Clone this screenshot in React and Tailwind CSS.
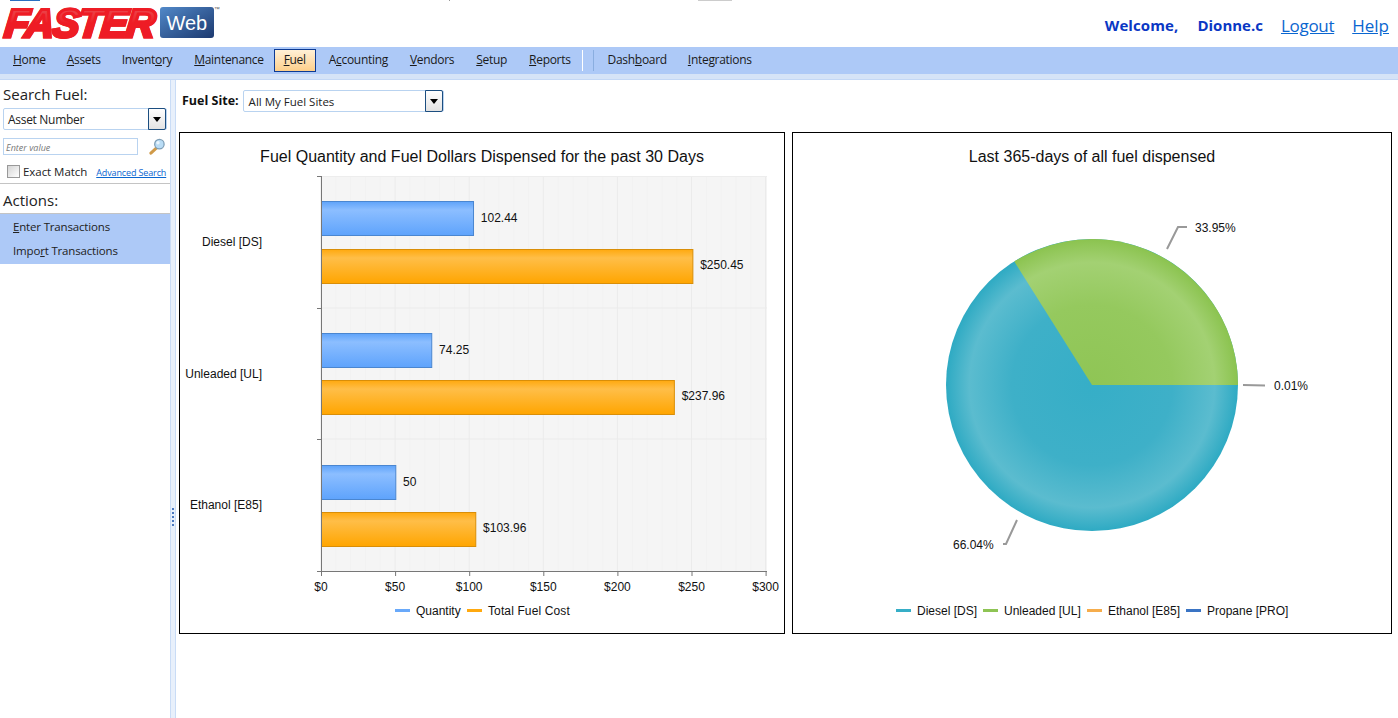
const UI_FONT = "font-['Open_Sans','Noto_Sans',sans-serif]";

const NAV_LEFT = [
  ['', 'H', 'ome', 'mr-[21px]'],
  ['', 'A', 'ssets', 'mr-[21px]'],
  ['Invent', 'o', 'ry', 'mr-[22px]'],
  ['', 'M', 'aintenance', 'mr-[22px]'],
  ['', 'F', 'uel', ''],
  ['A', 'c', 'counting', 'mr-[22px]'],
  ['', 'V', 'endors', 'mr-[22px]'],
  ['', 'S', 'etup', 'mr-[22px]'],
  ['', 'R', 'eports', 'mr-[22px]'],
];

const NAV_RIGHT = [
  ['Dash', 'b', 'oard'],
  ['', 'I', 'ntegrations'],
];

const BARS = [
  { label: 'Diesel [DS]', labelY: 242, qty: 102.44, qtyText: '102.44', cost: 250.45, y1: 201, y2: 249 },
  { label: 'Unleaded [UL]', labelY: 374, qty: 74.25, qtyText: '74.25', cost: 237.96, y1: 333, y2: 380 },
  { label: 'Ethanol [E85]', labelY: 505, qty: 50, qtyText: '50', cost: 103.96, y1: 465, y2: 512 },
];

const TICKS = [0, 50, 100, 150, 200, 250, 300];
const toX = (v) => 321 + v * 1.482;

function NavLabel({ parts }) {
  return (
    <span>
      {parts[0]}
      <u>{parts[1]}</u>
      {parts[2]}
    </span>
  );
}

function DropButton() {
  return (
    <span className="flex h-[22px] w-[18px] shrink-0 items-center justify-center rounded-r-[2px] border border-[#1c4e80] bg-gradient-to-b from-white to-[#e3e3e3]">
      <span className="h-0 w-0 border-x-[4.5px] border-t-[5px] border-x-transparent border-t-black" />
    </span>
  );
}

function BarChart() {
  const grid = [];
  for (let v = 0; v <= 300; v += 10) grid.push(v);
  return (
    <svg viewBox="180 133 604 500" className="block h-[500px] w-[604px]" fontFamily="'Liberation Sans', Arial, sans-serif">
      <defs>
        <linearGradient id="blueBar" x1="0" y1="0" x2="0" y2="1">
          <stop offset="0" stopColor="#5ea3fa" />
          <stop offset="0.25" stopColor="#8cbeff" />
          <stop offset="1" stopColor="#5ea3fc" />
        </linearGradient>
        <linearGradient id="orangeBar" x1="0" y1="0" x2="0" y2="1">
          <stop offset="0" stopColor="#ffa90f" />
          <stop offset="0.25" stopColor="#ffbe48" />
          <stop offset="1" stopColor="#ffa500" />
        </linearGradient>
      </defs>
      <text x="482" y="162" fontSize="16" textAnchor="middle" fill="#111">
        Fuel Quantity and Fuel Dollars Dispensed for the past 30 Days
      </text>
      <rect x="321" y="176" width="446" height="396" fill="#f5f5f5" />
      {grid.map((v) => (
        <line key={v} x1={toX(v)} x2={toX(v)} y1="176" y2="572" stroke={v % 50 === 0 ? '#ebebeb' : '#f2f2f2'} />
      ))}
      <line x1="321" x2="767" y1="308" y2="308" stroke="#ebebeb" />
      <line x1="321" x2="767" y1="439" y2="439" stroke="#ebebeb" />
      <line x1="321" x2="767" y1="176.5" y2="176.5" stroke="#ededed" />
      {BARS.map((b) => (
        <g key={b.label}>
          <text x="262" y={b.labelY + 4} fontSize="12" textAnchor="end" fill="#111">{b.label}</text>
          <rect x="321.5" y={b.y1 + 0.5} width={toX(b.qty) - 320.8} height="34" fill="url(#blueBar)" stroke="#4a86d0" />
          <text x={toX(b.qty) + 8} y={b.y1 + 21} fontSize="12" fill="#111">{b.qtyText}</text>
          <rect x="321.5" y={b.y2 + 0.5} width={toX(b.cost) - 320.8} height="34" fill="url(#orangeBar)" stroke="#d98e08" />
          <text x={toX(b.cost) + 8} y={b.y2 + 20} fontSize="12" fill="#111">{'$' + b.cost.toFixed(2)}</text>
        </g>
      ))}
      <line x1="321.5" x2="321.5" y1="176" y2="572" stroke="#777" />
      <line x1="317" x2="767" y1="571.5" y2="571.5" stroke="#777" />
      {[176.5, 308.5, 439.5].map((y) => (
        <line key={y} x1="317" x2="321" y1={y} y2={y} stroke="#777" />
      ))}
      {TICKS.map((v) => (
        <g key={v}>
          <line x1={toX(v) + 0.5} x2={toX(v) + 0.5} y1="572" y2="576" stroke="#777" />
          <text x={toX(v)} y="591" fontSize="12" textAnchor="middle" fill="#111">{'$' + v}</text>
        </g>
      ))}
      <rect x="395" y="609" width="15" height="3" fill="#69a9fa" />
      <text x="416" y="615" fontSize="12" fill="#111">Quantity</text>
      <rect x="467" y="609" width="15" height="3" fill="#ffa90f" />
      <text x="488" y="615" fontSize="12" letterSpacing="0.12" fill="#111">Total Fuel Cost</text>
    </svg>
  );
}

function PieChart() {
  return (
    <svg viewBox="793 133 598 500" className="block h-[500px] w-[598px]" fontFamily="'Liberation Sans', Arial, sans-serif">
      <defs>
        <radialGradient id="bluePie" gradientUnits="userSpaceOnUse" cx="1092" cy="385" r="146">
          <stop offset="0" stopColor="#36aec7" />
          <stop offset="0.55" stopColor="#3eb0c8" />
          <stop offset="0.84" stopColor="#5bbccf" />
          <stop offset="1" stopColor="#2eaac3" />
        </radialGradient>
        <radialGradient id="greenPie" gradientUnits="userSpaceOnUse" cx="1092" cy="385" r="146">
          <stop offset="0" stopColor="#8fc555" />
          <stop offset="0.55" stopColor="#95c95e" />
          <stop offset="0.84" stopColor="#a3d173" />
          <stop offset="1" stopColor="#8bc34f" />
        </radialGradient>
      </defs>
      <text x="1092" y="162" fontSize="16" textAnchor="middle" fill="#111">Last 365-days of all fuel dispensed</text>
      <circle cx="1092" cy="385" r="146" fill="url(#bluePie)" />
      <path d="M1092 385 L1238 385 A146 146 0 0 0 1014.3 261.5 Z" fill="url(#greenPie)" />
      <g fill="none" stroke="#999" strokeWidth="2">
        <path d="M1167 249 L1178 227 L1187 227" />
        <path d="M1243 385 L1265 385.500" />
        <path d="M1017 520 L1006 544 L1003 544" />
      </g>
      <text x="1195" y="232" fontSize="12" fill="#111">33.95%</text>
      <text x="1274" y="390" fontSize="12" fill="#111">0.01%</text>
      <text x="953" y="549" fontSize="12" fill="#111">66.04%</text>
      <rect x="896" y="609" width="15" height="3" fill="#36aec7" />
      <text x="917" y="615" fontSize="12" fill="#111">Diesel [DS]</text>
      <rect x="983" y="609" width="15" height="3" fill="#8ec454" />
      <text x="1004" y="615" fontSize="12" fill="#111">Unleaded [UL]</text>
      <rect x="1087" y="609" width="15" height="3" fill="#f6ad4c" />
      <text x="1108" y="615" fontSize="12" fill="#111">Ethanol [E85]</text>
      <rect x="1186" y="609" width="15" height="3" fill="#3a74c4" />
      <text x="1207" y="615" fontSize="12" fill="#111">Propane [PRO]</text>
    </svg>
  );
}

export default function App() {
  return (
    <div className={`flex h-[718px] w-[1398px] flex-col overflow-hidden bg-white ${UI_FONT}`}>
      {/* Header */}
      <div className="relative flex h-[47px] shrink-0 items-start justify-between">
        {/* slivers of the scrolled-off row above */}
        <span className="absolute top-0 left-[10px] h-px w-[30px] bg-[#2a6fc0]" />
        <span className="absolute top-0 left-[449px] h-px w-px bg-[#999]" />
        <span className="absolute top-0 left-[698px] h-px w-[34px] bg-[#ccc]" />
        <div className="flex items-start pl-px">
          <span className="-skew-x-6 whitespace-nowrap bg-gradient-to-b from-[#e85560] via-[#ee1c25] to-[#ee1c25] bg-clip-text pr-[6px] pl-[4px] font-['Liberation_Sans',sans-serif] text-[40px] leading-[46px] font-bold tracking-[-1.5px] text-transparent italic [-webkit-text-stroke:3px_#ee1c25]">
            FASTER
          </span>
          <span className="mt-[7px] flex h-[31px] w-[54px] items-center justify-center rounded-[3px] bg-gradient-to-br from-[#5289c9] to-[#1d3a70] font-['Liberation_Sans',sans-serif] text-[20px] leading-none text-white">
            Web
          </span>
          <span className="mt-[6px] font-['Liberation_Sans',sans-serif] text-[6px] leading-none text-[#555]">™</span>
        </div>
        <div className="flex items-baseline pt-[13px] pr-[9px]">
          <span className="-translate-y-px text-[15px] font-bold tracking-[0.1px] text-[#0a37c4]">Welcome,</span>
          <span className="ml-[19px] -translate-y-px text-[15px] font-bold text-[#0a37c4]">Dionne.c</span>
          <a className="ml-[18px] text-[17px] tracking-[-0.3px] text-[#0a66d0] underline">Logout</a>
          <a className="ml-[18px] text-[17px] text-[#0a66d0] underline">Help</a>
        </div>
      </div>

      {/* Nav */}
      <div className="flex h-[27px] shrink-0 items-center bg-[#adc9f7] pb-[1px] pl-[13px] text-[12px] tracking-[-0.3px] text-[#1a1a1a]">
        {NAV_LEFT.map((item) =>
          item[1] === 'F' ? (
            <span
              key={item[2]}
              className="-ml-[12px] mr-[13px] flex h-[23px] w-[42px] items-center justify-center border border-[#0c3a94] bg-gradient-to-b from-[#fff0d6] to-[#fdcf8a]"
            >
              <NavLabel parts={item} />
            </span>
          ) : (
            <span key={item[1] + item[2]} className={item[3]}>
              <NavLabel parts={item} />
            </span>
          )
        )}
        <span className="ml-[-11px] h-[21px] w-px bg-white" />
        <span className="ml-[10px] h-[21px] w-px bg-[#8aaee0]" />
        <span className="ml-[14px] flex gap-[21px]">
          {NAV_RIGHT.map((item) => (
            <span key={item[2]}>
              <NavLabel parts={item} />
            </span>
          ))}
        </span>
      </div>
      <div className="h-[6px] shrink-0 border-b border-[#c3d7f5] bg-[#d5e3f7]" />

      {/* Body */}
      <div className="flex min-h-0 flex-1">
        <aside className="w-[170px] shrink-0 text-[#222]">
          <div className="h-[104px] border-b border-[#c4c4c4]">
            <div className="pt-[3px] pl-[3px] text-[15px] leading-[22px]">Search Fuel:</div>
            <div className="mx-[3px] mt-[3px] flex h-[22px] items-center justify-between rounded-[2px] border border-[#b9d3f0] pl-[4px] text-[12px] tracking-[-0.3px]">
              <span className="mt-[1px]">Asset Number</span>
              <DropButton />
            </div>
            <div className="mt-[8px] flex items-center pl-[3px]">
              <span className="flex h-[17px] w-[135px] items-center border border-[#b9d3f0] pl-[2px] text-[9px] text-[#777] italic">
                <span className="mt-[3px]">Enter value</span>
              </span>
              <svg viewBox="0 0 18 18" className="ml-[11px] h-[17px] w-[17px]">
                <path d="M8 10.500 L2 16" stroke="#d09a48" strokeWidth="3.200" strokeLinecap="round" />
                <circle cx="11" cy="6.500" r="5" fill="#b9dcf5" stroke="#7d9db5" strokeWidth="1.300" />
                <circle cx="9.500" cy="5" r="1.800" fill="#eaf5fd" />
              </svg>
            </div>
            <div className="mt-[8px] flex items-center pl-[7px]">
              <span className="h-[13px] w-[13px] border border-[#999] bg-gradient-to-br from-[#d5d5d5] to-white" />
              <span className="ml-[3px] text-[11.500px] tracking-[-0.05px]">Exact Match</span>
              <a className="mt-[2px] ml-[9px] text-[9px] tracking-[-0.13px] text-[#0a66d0] underline">Advanced Search</a>
            </div>
          </div>
          <div className="pt-[5px] pl-[3px] text-[15px] leading-[22px]">Actions:</div>
          <div className="mt-[2px] border-t border-[#c4c4c4] bg-[#adc9f7] pt-[1px] pb-[1px] pl-[13px] text-[11.500px] leading-[24px] tracking-[-0.17px]">
            <div>
              <u>E</u>nter Transactions
            </div>
            <div>
              Impo<u>r</u>t Transactions
            </div>
          </div>
        </aside>

        {/* Splitter */}
        <div className="relative w-[6px] shrink-0 border-x border-[#c9dcf6] bg-[#e8f0fb]">
          <div className="absolute top-[428px] left-[1px] flex flex-col gap-[2px]">
            {[0, 1, 2, 3, 4].map((i) => (
              <span key={i} className="h-[2px] w-[2px] bg-[#4a78c0]" />
            ))}
          </div>
        </div>

        <main className="min-w-0 flex-1 pl-[3px]">
          <div className="flex h-[52px] items-start pt-[10px] pl-[3px]">
            <span className="mt-[2px] text-[12.500px] font-bold text-[#111]">Fuel Site:</span>
            <div className="ml-[4px] flex h-[22px] w-[201px] items-center justify-between rounded-[2px] border border-[#b9d3f0] pl-[5px] text-[11.500px] text-[#222]">
              <span className="mt-[1px]">All My Fuel Sites</span>
              <DropButton />
            </div>
          </div>
          <div className="flex gap-[7px]">
            <div className="border border-black">
              <BarChart />
            </div>
            <div className="border border-black">
              <PieChart />
            </div>
          </div>
        </main>
      </div>
    </div>
  );
}
